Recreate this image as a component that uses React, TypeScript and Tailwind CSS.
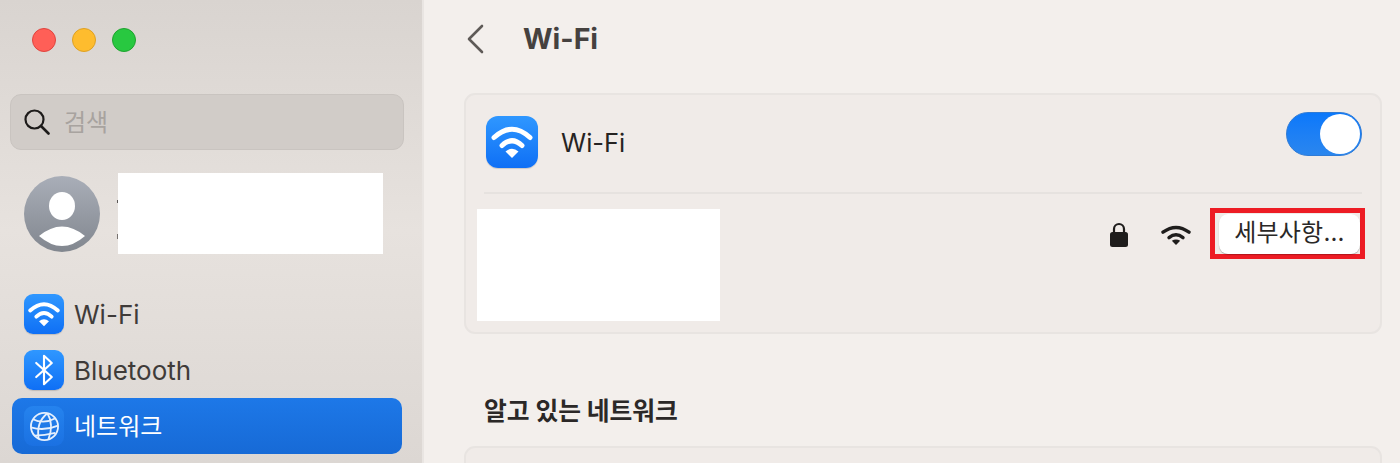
const FONT = "font-['Inter','Noto_Sans_CJK_KR',sans-serif]";

function WifiGlyph({ className, color = "currentColor" }: { className?: string; color?: string }) {
  return (
    <svg viewBox="0 0 52 52" className={className} fill="none" stroke={color} strokeWidth={5} strokeLinecap="round">
      <path d="M8 21.5Q26 5 44 21.5" />
      <path d="M16 29.5Q26 20 36 29.5" />
      <path d="M26 42L19.5 35.5Q26 30 32.5 35.5Z" fill={color} stroke="none" />
    </svg>
  );
}

function SmallWifi() {
  return (
    <svg viewBox="0 0 30 20" className="mt-[2px] h-[20px] w-[30px]" fill="none" stroke="#1f1d1c" strokeWidth={3.4} strokeLinecap="round">
      <path d="M2 7.2Q15 -2.4 28 7.2" />
      <path d="M8 12.6Q15 7 22 12.6" />
      <path d="M15 20L10.8 15.8Q15 13 19.2 15.8Z" fill="#1f1d1c" stroke="none" />
    </svg>
  );
}

function AppIcon({ children, size, tone }: { children: React.ReactNode; size: string; tone?: string }) {
  return (
    <div className={`${size} ${tone ?? "bg-gradient-to-b from-[#2f97ff] to-[#0f6ff5] shadow-[0_1px_1px_rgba(0,0,0,0.15)]"} flex shrink-0 items-center justify-center`}>
      {children}
    </div>
  );
}

function GlobeGlyph() {
  return (
    <svg viewBox="0 0 32 32" className="h-[31px] w-[31px]" fill="none" stroke="#e6f0fd" strokeWidth={1.9}>
      <circle cx="16" cy="16" r="14" />
      <path d="M19 2.4Q7 12 10 29" />
      <path d="M19 2.4Q26 14 20 29.6" />
      <path d="M4 8.5Q15 14 27.5 7.5" />
      <path d="M2 17Q16 21 30 15" />
      <path d="M6 25.5Q16 25 27 22.5" />
    </svg>
  );
}

function NavItem({ label, icon, active, textSize }: { label: string; icon: React.ReactNode; active?: boolean; textSize: string }) {
  return (
    <div className={`flex h-[56px] items-center gap-[10px] rounded-[10px] pl-[12px] ${active ? "bg-gradient-to-b from-[#1d78e8] to-[#176ad6] text-white" : "text-[#3f3b39]"}`}>
      {icon}
      <span className={`${textSize} pt-[1px] leading-none`}>{label}</span>
    </div>
  );
}

export default function App() {
  return (
    <div className={`flex h-[463px] w-[1400px] overflow-hidden bg-[#f3efec] ${FONT}`}>
      <aside className="flex w-[424px] shrink-0 flex-col border-r-2 border-[#e9e5e2] bg-gradient-to-b from-[#d9d4d0] via-[#e7e2de] to-[#dcd7d3] pl-[10px] pr-[18px]">
        <div className="flex gap-[16px] pl-[22px] pt-[28px]">
          <div className="h-[24px] w-[24px] rounded-full border border-[#e0443e] bg-[#ff5f57]" />
          <div className="h-[24px] w-[24px] rounded-full border border-[#dea123] bg-[#febc2e]" />
          <div className="h-[24px] w-[24px] rounded-full border border-[#1fa32f] bg-[#28c840]" />
        </div>

        <div className="mt-[42px] flex h-[56px] w-[394px] items-center gap-[14px] rounded-[11px] border border-[#c9c4c0] bg-[#d1ccc8] pl-[13px]">
          <svg viewBox="0 0 26 26" className="h-[26px] w-[26px]" fill="none" stroke="#1d1b1a" strokeWidth={2.2} strokeLinecap="round">
            <circle cx="10.5" cy="10.5" r="9" />
            <path d="M17 17L24.5 24.5" strokeWidth={2.6} />
          </svg>
          <span className="pt-[1px] text-[24px] leading-none text-[#a8a39f]">검색</span>
        </div>

        <div className="mt-[23px] flex h-[81px] items-center pl-[14px]">
          <div className="h-[76px] w-[76px] overflow-hidden rounded-full bg-gradient-to-b from-[#a9aeb8] to-[#82878f]">
            <svg viewBox="0 0 76 76" className="h-[76px] w-[76px]" fill="#ffffff">
              <ellipse cx="38" cy="30" rx="13" ry="14" />
              <path d="M15 60Q38 41 61 60Q38 80 15 60Z" />
            </svg>
          </div>
          <div className="ml-[17px] flex h-[81px] w-[1px] flex-col">
            <div className="mt-[27px] h-[3px] bg-[#5b5755]" />
            <div className="mt-[31px] h-[5px] bg-[#77726f]" />
          </div>
          <div className="h-[81px] w-[265px] bg-white" />
        </div>

        <nav className="mt-[32px] flex w-[392px] flex-col self-start pl-[2px]">
          <NavItem
            label="Wi-Fi"
            textSize="text-[26px]"
            icon={
              <AppIcon size="h-[40px] w-[40px] rounded-[9px]">
                <WifiGlyph className="h-[40px] w-[40px]" color="#ffffff" />
              </AppIcon>
            }
          />
          <NavItem
            label="Bluetooth"
            textSize="text-[26px]"
            icon={
              <AppIcon size="h-[40px] w-[40px] rounded-[9px]">
                <svg viewBox="0 0 24 24" className="h-[34px] w-[34px]" fill="none" stroke="#ffffff" strokeWidth={1.5} strokeLinejoin="round" strokeLinecap="round">
                  <path d="m6.5 7 11 10-5.5 5V2l5.5 5-11 10" />
                </svg>
              </AppIcon>
            }
          />
          <NavItem
            active
            label="네트워크"
            textSize="text-[24px]"
            icon={
              <AppIcon size="h-[40px] w-[40px] rounded-[9px]" tone="bg-gradient-to-b from-[#2583ee] to-[#1b71e2]">
                <GlobeGlyph />
              </AppIcon>
            }
          />
        </nav>
      </aside>

      <main className="flex min-w-0 flex-1 flex-col pl-[40px] pr-[18px]">
        <header className="flex h-[80px] shrink-0 items-center pb-[2px]">
          <svg viewBox="0 0 20 30" className="ml-[1px] h-[30px] w-[20px]" fill="none" stroke="#5e5a57" strokeWidth={2.6} strokeLinecap="round" strokeLinejoin="round">
            <path d="M17 2L4 15L17 28" />
          </svg>
          <h1 className="ml-[38px] text-[28.5px] font-bold leading-none text-[#45413f]">Wi-Fi</h1>
        </header>

        <section className="mt-[13px] h-[241px] shrink-0 rounded-[11px] border-2 border-[#e8e4e1] bg-[#f0ebe8]">
          <div className="flex h-[97px] items-start justify-between pl-[20px] pr-[18px]">
            <div className="mt-[21px] flex items-center gap-[23px]">
              <AppIcon size="h-[52px] w-[52px] rounded-[12px]">
                <WifiGlyph className="h-[52px] w-[52px]" color="#ffffff" />
              </AppIcon>
              <span className="pt-[2px] text-[25.5px] leading-none text-[#262322]">Wi-Fi</span>
            </div>
            <div className="mt-[17px] flex h-[44px] w-[76px] items-center justify-end rounded-full border border-[#2f7bd6] bg-gradient-to-b from-[#0a78fb] to-[#2a86ee] pr-[1px]">
              <div className="h-[40px] w-[40px] rounded-full bg-white" />
            </div>
          </div>
          <div className="ml-[18px] mr-[18px] h-[2px] bg-[#e6e2df]" />
          <div className="flex items-start justify-between pl-[11px] pr-[15px] pt-[14px]">
            <div className="mt-[1px] h-[112px] w-[243px] bg-white" />
            <div className="flex items-center">
              <svg viewBox="0 0 18 25" className="mt-[2px] h-[25px] w-[18px]" fill="#1f1d1c">
                <path d="M4 11V7a5 5 0 0 1 10 0v4" fill="none" stroke="#1f1d1c" strokeWidth={2.2} />
                <rect x="0" y="10" width="18" height="15" rx="2.5" />
              </svg>
              <div className="ml-[33px]">
                <SmallWifi />
              </div>
              <div className="ml-[19px] flex h-[51px] w-[155px] items-center border-[5px] border-[#ed1c24] pl-[4px]">
                <button className="flex h-[40px] w-[141px] items-center justify-center rounded-[9px] bg-white pb-[1px] text-[24px] leading-none tracking-[0.2px] text-[#2a2827] shadow-[0_1px_1px_rgba(0,0,0,0.25)]">
                  세부사항...
                </button>
              </div>
            </div>
          </div>
        </section>

        <h2 className="ml-[20px] mt-[63px] text-[24.75px] font-bold leading-[28px] text-[#2b2827]">알고 있는 네트워크</h2>

        <section className="mt-[21px] h-[60px] shrink-0 rounded-[11px] border-2 border-[#e8e4e1] bg-[#f0ebe8]" />
      </main>
    </div>
  );
}
